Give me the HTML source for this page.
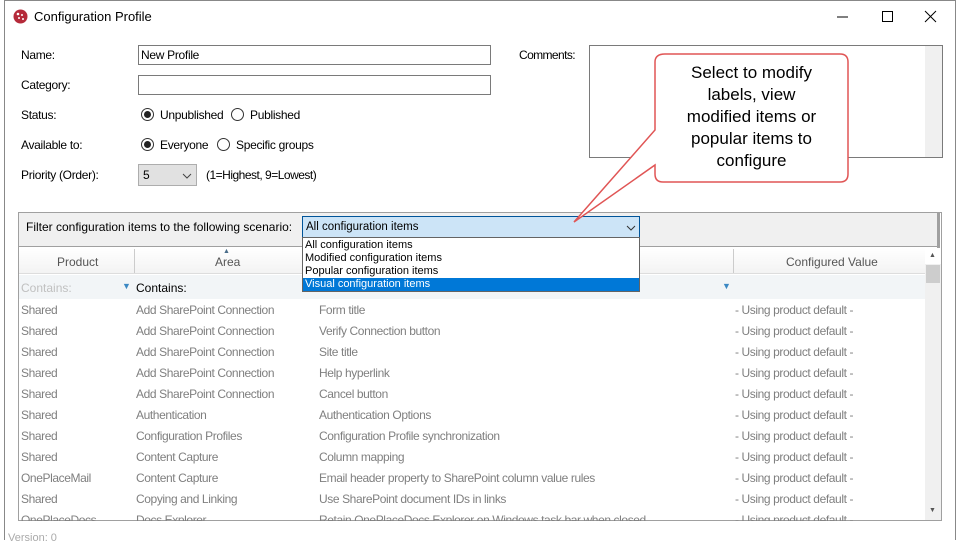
<!DOCTYPE html>
<html><head><style>
*{margin:0;padding:0;box-sizing:border-box}
body{width:960px;height:540px;background:#fff;font-family:"Liberation Sans",sans-serif;font-size:12px;color:#000;position:relative;overflow:hidden}
.a{position:absolute;white-space:nowrap}
.lbl{font-size:12px;letter-spacing:-0.3px}
.in{position:absolute;border:1px solid #7a7a7a;background:#fff}
.rad{position:absolute;width:13px;height:13px;border:1px solid #333;border-radius:50%;background:#fff}
.rad.on::after{content:"";position:absolute;left:2px;top:2px;width:7px;height:7px;border-radius:50%;background:#222}
.g{color:#7f7f7f;font-size:12px;letter-spacing:-0.4px}
</style></head><body>
<div class="a" style="left:4px;top:0;width:952px;height:540px;border-left:1px solid #888;border-right:1px solid #888;border-top:1px solid #888"></div>
<svg class="a" style="left:13px;top:9px" width="15" height="15"><circle cx="7.5" cy="7.5" r="7" fill="#b52a3a"/><circle cx="5" cy="5" r="1.3" fill="#fff"/><circle cx="9" cy="6" r="1" fill="#fff"/><circle cx="6" cy="9" r="1" fill="#fff"/><circle cx="10" cy="10" r="1" fill="#fff"/></svg>
<div class="a" style="left:34px;top:9px;font-size:13px">Configuration Profile</div>
<svg class="a" style="left:830px;top:8px" width="110" height="18"><line x1="7" y1="9" x2="18" y2="9" stroke="#000"/><rect x="52.5" y="3.5" width="10" height="10" fill="none" stroke="#000"/><path d="M95 3 L106 14 M106 3 L95 14" stroke="#000"/></svg>

<div class="a lbl" style="left:21px;top:48px">Name:</div>
<div class="in" style="left:138px;top:45px;width:353px;height:20px"><span style="position:absolute;left:2px;top:2px;letter-spacing:-0.3px">New Profile</span></div>
<div class="a lbl" style="left:21px;top:78px">Category:</div>
<div class="in" style="left:138px;top:75px;width:353px;height:20px"></div>
<div class="a lbl" style="left:21px;top:108px">Status:</div>
<div class="rad on" style="left:141px;top:108px"></div><div class="a lbl" style="left:160px;top:108px">Unpublished</div>
<div class="rad" style="left:231px;top:108px"></div><div class="a lbl" style="left:250px;top:108px">Published</div>
<div class="a lbl" style="left:21px;top:138px">Available to:</div>
<div class="rad on" style="left:141px;top:138px"></div><div class="a lbl" style="left:160px;top:138px">Everyone</div>
<div class="rad" style="left:217px;top:138px"></div><div class="a lbl" style="left:236px;top:138px">Specific groups</div>
<div class="a lbl" style="left:21px;top:168px">Priority (Order):</div>
<div class="a" style="left:138px;top:164px;width:59px;height:22px;background:#e1e1e1;border:1px solid #adadad"><span style="position:absolute;left:4px;top:3px">5</span><svg style="position:absolute;left:43px;top:8px" width="10" height="6"><path d="M1 1 L5 5 L9 1" fill="none" stroke="#444"/></svg></div>
<div class="a lbl" style="left:206px;top:168px;letter-spacing:-0.5px">(1=Highest, 9=Lowest)</div>
<div class="a lbl" style="left:519px;top:48px;letter-spacing:-0.6px">Comments:</div>
<div class="in" style="left:589px;top:45px;width:354px;height:113px"><div style="position:absolute;right:0;top:0;width:17px;height:111px;background:#f0f0f0"></div></div>

<!-- grid -->
<div class="a" style="left:18px;top:212px;width:924px;height:309px;border:1px solid #a0a0a0;background:#fff"></div>
<div class="a" style="left:19px;top:213px;width:918px;height:34px;background:#f0f0f0;border-bottom:1px solid #a0a0a0"></div>
<div class="a" style="left:937px;top:212px;width:3px;height:36px;background:#a0a0a0"></div>
<div class="a" style="left:26px;top:220px;font-size:12px">Filter configuration items to the following scenario:</div>
<div class="a" style="left:19px;top:248px;width:906px;height:26px;background:linear-gradient(#fff,#f3f3f3);border-bottom:1px solid #ddd"></div>
<div class="a" style="left:134px;top:249px;width:1px;height:24px;background:#ccc"></div>
<div class="a" style="left:733px;top:249px;width:1px;height:24px;background:#ccc"></div>
<div class="a" style="left:57px;top:255px;color:#555">Product</div>
<div class="a" style="left:215px;top:255px;color:#555">Area</div>
<div class="a" style="left:223px;top:248px;font-size:7px;color:#4a6d8a">▲</div>
<div class="a" style="left:786px;top:255px;color:#555">Configured Value</div>
<div class="a" style="left:19px;top:275px;width:906px;height:24px;background:#f2f5f7"></div>
<div class="a" style="left:21px;top:281px;color:#c0c0c0">Contains:</div>
<div class="a" style="left:122px;top:281px;color:#3b88c3;font-size:9px">▼</div>
<div class="a" style="left:136px;top:281px">Contains:</div>
<div class="a" style="left:722px;top:281px;color:#3b88c3;font-size:9px">▼</div>
<div class="a" style="left:925px;top:264px;width:16px;height:256px;background:#f0f0f0"></div>
<div class="a" style="left:926px;top:265px;width:14px;height:18px;background:#cdcdcd"></div>
<div class="a" style="left:929px;top:252px;font-size:7px;color:#555">▲</div>
<div class="a" style="left:929px;top:507px;font-size:7px;color:#555">▼</div>

<div class="a g" style="left:21px;top:300px;line-height:21px">Shared<br>Shared<br>Shared<br>Shared<br>Shared<br>Shared<br>Shared<br>Shared<br>OnePlaceMail<br>Shared<br>OnePlaceDocs</div>
<div class="a g" style="left:136px;top:300px;line-height:21px">Add SharePoint Connection<br>Add SharePoint Connection<br>Add SharePoint Connection<br>Add SharePoint Connection<br>Add SharePoint Connection<br>Authentication<br>Configuration Profiles<br>Content Capture<br>Content Capture<br>Copying and Linking<br>Docs Explorer</div>
<div class="a g" style="left:319px;top:300px;line-height:21px">Form title<br>Verify Connection button<br>Site title<br>Help hyperlink<br>Cancel button<br>Authentication Options<br>Configuration Profile synchronization<br>Column mapping<br>Email header property to SharePoint column value rules<br>Use SharePoint document IDs in links<br>Retain OnePlaceDocs Explorer on Windows task bar when closed</div>
<div class="a g" style="left:735px;top:300px;line-height:21px">- Using product default -<br>- Using product default -<br>- Using product default -<br>- Using product default -<br>- Using product default -<br>- Using product default -<br>- Using product default -<br>- Using product default -<br>- Using product default -<br>- Using product default -<br>- Using product default -</div>
<div class="a" style="left:0;top:521px;width:960px;height:19px;background:#fff"></div>
<div class="a" style="left:4px;top:521px;width:1px;height:19px;background:#888"></div>
<div class="a" style="left:955px;top:521px;width:1px;height:19px;background:#888"></div>
<div class="a" style="left:8px;top:532px;color:#aaa;font-size:11px">Version: 0</div>

<!-- combo + dropdown -->
<div class="a" style="left:302px;top:216px;width:338px;height:22px;background:#cce4f7;border:1px solid #005499"><span style="position:absolute;left:3px;top:4px;font-size:11.5px">All configuration items</span><svg style="position:absolute;left:323px;top:8px" width="10" height="6"><path d="M1 1 L5 5 L9 1" fill="none" stroke="#333"/></svg></div>
<div class="a" style="left:302px;top:237px;width:338px;height:55px;background:#fff;border:1px solid #646464;font-size:11px;line-height:13px;padding-top:1px">
<div style="padding-left:2px">All configuration items</div>
<div style="padding-left:2px">Modified configuration items</div>
<div style="padding-left:2px">Popular configuration items</div>
<div style="padding-left:2px;background:#0078d7;color:#fff">Visual configuration items</div>
</div>

<!-- callout -->
<svg class="a" style="left:560px;top:50px" width="300" height="180">
<path d="M105 4 H280 Q288 4 288 12 V124 Q288 132 280 132 H103 Q95 132 95 124 V115 L14 172 L95 80 V12 Q95 4 105 4 Z" fill="#fff" stroke="#e05555" stroke-width="1.5"/>
</svg>
<div class="a" style="left:655px;top:62px;width:193px;text-align:center;font-size:17px;line-height:22px">Select to modify<br>labels, view<br>modified items or<br>popular items to<br>configure</div>
</body></html>
